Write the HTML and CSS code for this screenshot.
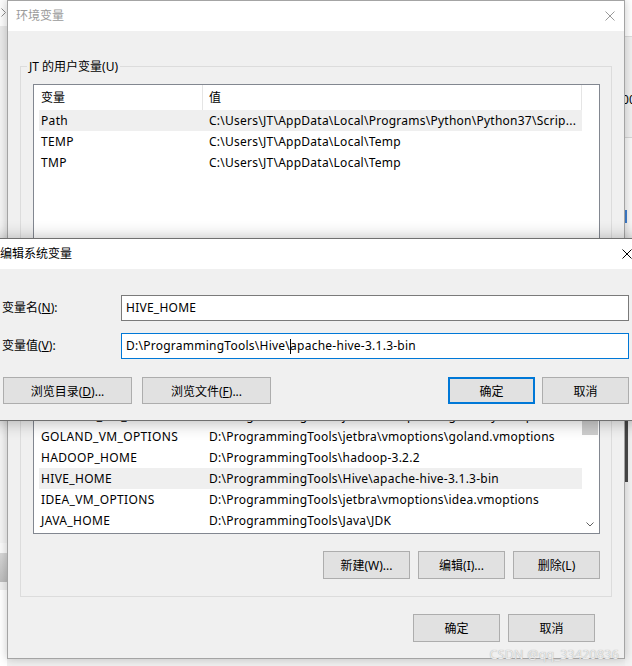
FILE: index.html
```html
<!DOCTYPE html>
<html lang="zh-CN">
<head>
<meta charset="utf-8">
<title>环境变量</title>
<link rel="stylesheet" href="styles.css">
</head>
<body>
<div class="desktop">
  <div class="backdrop">
    <div class="strip">
      <div class="sl-a"><svg class="chev" width="5" height="9" viewBox="0 0 5 9"><polyline points="0.5,0.5 4.5,4.5 0.5,8.5" fill="none" stroke="#8a8a8a" stroke-width="1"/></svg></div>
      <div class="sl-b"></div>
      <div class="sl-c"></div>
      <div class="sl-d"></div>
      <div class="sl-e"></div>
      <div class="sl-f"></div>
      <div class="sl-g"></div>
    </div>
    <div class="backdrop-gap"></div>
    <div class="strip">
      <div class="sr-a"></div>
      <div class="sr-b"><span class="sr-text">00</span></div>
      <div class="sr-c"><span class="sr-mark"></span></div>
      <div class="sr-d"></div>
      <div class="sr-e"><span class="sr-bar"></span></div>
    </div>
  </div>

  <section class="win main-win">
    <header class="titlebar">
      <span class="title">环境变量</span>
      <svg class="close" width="10" height="10" viewBox="0 0 10 10"><path d="M0.5 0.5L9.5 9.5M9.5 0.5L0.5 9.5" stroke="currentColor" stroke-width="1"/></svg>
    </header>
    <div class="win-body">
      <fieldset class="group">
        <legend>JT 的用户变量(U)</legend>
        <div class="listview user-lv">
          <div class="lv-main">
            <div class="lv-header">
              <div class="lv-head-cell lv-head-name">变量</div>
              <div class="lv-head-cell lv-head-val">值</div>
            </div>
            <div class="lv-rows">
              <div class="lv-row hot"><span class="lv-name">Path</span><span class="lv-val">C:\Users\JT\AppData\Local\Programs\Python\Python37\Scrip...</span></div>
              <div class="lv-row"><span class="lv-name">TEMP</span><span class="lv-val">C:\Users\JT\AppData\Local\Temp</span></div>
              <div class="lv-row"><span class="lv-name">TMP</span><span class="lv-val">C:\Users\JT\AppData\Local\Temp</span></div>
            </div>
          </div>
          <div class="vscroll-empty"></div>
        </div>
        <div class="btn-row">
          <button type="button" class="btn">新建(N)...</button>
          <button type="button" class="btn">编辑(E)...</button>
          <button type="button" class="btn">删除(D)</button>
        </div>
      </fieldset>

      <fieldset class="group sys-group">
        <legend>系统变量(S)</legend>
        <div class="listview sys-lv">
          <div class="lv-main">
            <div class="lv-header">
              <div class="lv-head-cell lv-head-name">变量</div>
              <div class="lv-head-cell lv-head-val">值</div>
            </div>
            <div class="lv-rows">
              <div class="lv-row"><span class="lv-name">ComSpec</span><span class="lv-val">C:\Windows\system32\cmd.exe</span></div>
              <div class="lv-row"><span class="lv-name">DriverData</span><span class="lv-val">C:\Windows\System32\Drivers\DriverData</span></div>
              <div class="lv-row"><span class="lv-name">GATEWAY_VM_OPTIONS</span><span class="lv-val">D:\ProgrammingTools\jetbra\vmoptions\gateway.vmoptions</span></div>
              <div class="lv-row"><span class="lv-name">GOLAND_VM_OPTIONS</span><span class="lv-val">D:\ProgrammingTools\jetbra\vmoptions\goland.vmoptions</span></div>
              <div class="lv-row"><span class="lv-name">HADOOP_HOME</span><span class="lv-val">D:\ProgrammingTools\hadoop-3.2.2</span></div>
              <div class="lv-row hot"><span class="lv-name">HIVE_HOME</span><span class="lv-val">D:\ProgrammingTools\Hive\apache-hive-3.1.3-bin</span></div>
              <div class="lv-row"><span class="lv-name">IDEA_VM_OPTIONS</span><span class="lv-val">D:\ProgrammingTools\jetbra\vmoptions\idea.vmoptions</span></div>
              <div class="lv-row"><span class="lv-name">JAVA_HOME</span><span class="lv-val">D:\ProgrammingTools\Java\JDK</span></div>
            </div>
          </div>
          <div class="vscroll">
            <div class="vs-btn"></div>
            <div class="vs-thumb"></div>
            <div class="vs-track"></div>
            <div class="vs-btn"><svg width="8" height="5" viewBox="0 0 8 5"><polyline points="0.5,0.5 4,4 7.5,0.5" fill="none" stroke="#606060" stroke-width="1"/></svg></div>
          </div>
        </div>
        <div class="btn-row">
          <button type="button" class="btn">新建(W)...</button>
          <button type="button" class="btn">编辑(I)...</button>
          <button type="button" class="btn">删除(L)</button>
        </div>
      </fieldset>

      <div class="dlg-btns">
        <button type="button" class="btn">确定</button>
        <button type="button" class="btn">取消</button>
      </div>
    </div>
  </section>

  <section class="win edit-win">
    <header class="titlebar">
      <span class="title">编辑系统变量</span>
      <svg class="close" width="10" height="10" viewBox="0 0 10 10"><path d="M0.5 0.5L9.5 9.5M9.5 0.5L0.5 9.5" stroke="currentColor" stroke-width="1"/></svg>
    </header>
    <div class="edit-body">
      <div class="form">
        <label class="form-label">变量名(<u>N</u>):</label>
        <div class="field">HIVE_HOME</div>
        <label class="form-label">变量值(<u>V</u>):</label>
        <div class="field focus">D:\ProgrammingTools\Hive\<span class="caret"></span>apache-hive-3.1.3-bin</div>
      </div>
      <div class="edit-btns">
        <button type="button" class="btn wide">浏览目录(<u>D</u>)...</button>
        <button type="button" class="btn wide">浏览文件(<u>F</u>)...</button>
        <div class="btn-right">
          <button type="button" class="btn default">确定</button>
          <button type="button" class="btn">取消</button>
        </div>
      </div>
    </div>
  </section>

  <div class="watermark">CSDN @qq_33420836</div>
</div>
</body>
</html>
```

FILE: styles.css
```css
* { box-sizing: border-box; }
html, body { margin: 0; padding: 0; }
body {
  width: 632px;
  height: 666px;
  overflow: hidden;
  font-family: "Noto Sans", "Noto Sans CJK SC", sans-serif;
  font-size: 12px;
  color: #000;
  background: #f0f0f0;
}
.desktop { position: relative; width: 632px; height: 666px; overflow: hidden; }

/* backdrop (other windows behind) */
.backdrop {
  position: absolute;
  inset: 0;
  display: grid;
  grid-template-columns: 7px 618px 7px;
}
.strip { display: flex; flex-direction: column; overflow: hidden; }
.sl-a { height: 26px; background: #fcfcfc; padding: 8px 0 0 1px; }
.chev { display: block; }
.sl-b { height: 34px; background: #e9e9e9; }
.sl-c { height: 483px; background: #f4f4f4; }
.sl-d { height: 10px; background: #fafafa; }
.sl-e { height: 29px; background: linear-gradient(#d6d6d6, #bcbcbc); }
.sl-f { height: 8px; background: #f0f0f0; }
.sl-g { flex: 1; background: #fff; }

.sr-a { height: 37px; background: #fff; border-bottom: 1px solid #dcdcdc; }
.sr-b { height: 101px; background: #f0f0f0; border-bottom: 1px solid #d6d6d6; padding-top: 55px; }
.sr-text { display: block; margin-left: -3px; line-height: 16px; letter-spacing: .25px; }
.sr-c { height: 100px; background: #f8f8f8; padding-top: 72px; }
.sr-mark { display: block; width: 2px; height: 13px; background: #3f7fd0; }
.sr-d { height: 182px; background: #f0f0f0; }
.sr-e { flex: 1; background: #f3f3f3; }
.sr-bar { display: block; width: 3px; height: 62px; background: #4a4a4a; }

/* windows */
.win { position: absolute; background: #f0f0f0; }
.titlebar {
  height: 30px;
  flex-shrink: 0;
  background: #fff;
  display: flex;
  align-items: center;
  justify-content: space-between;
}
.title { line-height: 16px; }
.close { display: block; }

.main-win {
  left: 7px;
  top: 0;
  width: 618px;
  border: 1px solid #a4a4a4;
  box-shadow: 0 0 9px rgba(0, 0, 0, .22);
}
.main-win .titlebar { padding: 0 9px 0 8px; }
.main-win .title { color: #9a9a9a; }
.main-win .close { color: #9a9a9a; }
.win-body { padding: 27px 12px 16px; }

.group {
  margin: 0;
  min-width: 0;
  padding: 9px 11px 17px 12px;
  border: 1px solid #dcdcdc;
}
.group + .group { margin-top: 16px; }
.group legend {
  padding: 0 2px;
  margin-left: -6px;
  line-height: 17px;
}

.listview {
  border: 1px solid #828790;
  background: #fff;
  display: grid;
  grid-template-columns: 1fr 17px;
}
.user-lv { height: 180px; }
.sys-lv { height: 171px; }
.lv-main { display: flex; flex-direction: column; min-width: 0; min-height: 0; overflow: hidden; }
.lv-header { display: flex; height: 25px; flex-shrink: 0; }
.lv-head-cell { line-height: 25px; border-right: 1px solid #e5e5e5; }
.lv-head-name { width: 169px; padding-left: 7px; }
.lv-head-val { width: 379px; padding-left: 6px; }
.lv-rows { flex: 1; min-height: 0; display: flex; flex-direction: column; overflow: hidden; }
.sys-lv .lv-rows { justify-content: flex-end; padding-bottom: 2px; }
.lv-row {
  flex-shrink: 0;
  height: 21px;
  line-height: 21px;
  margin-left: 5px;
  display: grid;
  grid-template-columns: 164px 1fr;
  white-space: nowrap;
  letter-spacing: .25px;
}
.lv-row.hot { background: #efefef; }
.lv-name { padding-left: 2px; overflow: hidden; letter-spacing: .35px; }
.lv-val { padding-left: 6px; overflow: hidden; }

.vscroll { display: flex; flex-direction: column; }
.vs-btn { height: 17px; flex-shrink: 0; display: flex; align-items: center; justify-content: center; }
.vs-btn svg { display: block; margin-left: -1px; }
.vs-thumb { height: 54px; margin: 0 1px 0 0; background: #cdcdcd; }
.vs-track { flex: 1; }

.btn {
  width: 87px;
  height: 28px;
  margin: 0;
  padding: 0;
  border: 1px solid #adadad;
  background: #e1e1e1;
  font: inherit;
  color: #000;
  line-height: normal;
}
.btn-row { display: flex; justify-content: flex-end; gap: 8px; margin-top: 11px; }
.sys-group .btn-row { margin-top: 17px; }
.dlg-btns { display: flex; justify-content: flex-end; gap: 8px; margin-top: 17px; padding-right: 17px; }

/* edit dialog */
.edit-win {
  left: -9px;
  top: 238px;
  width: 658px;
  border: 1px solid #707070;
  box-shadow: 0 1px 16px rgba(0, 0, 0, .3);
}
.edit-win .titlebar { padding: 0 16px 0 8px; }
.edit-win .close { color: #000; }
.edit-body { padding: 26px 19px 16px 10px; }
.form {
  display: grid;
  grid-template-columns: 119px 1fr;
  row-gap: 12px;
  align-items: center;
}
.form-label { line-height: 16px; }
.field {
  height: 26px;
  border: 1px solid #7a7a7a;
  background: #fff;
  padding-left: 4px;
  line-height: 24px;
  white-space: nowrap;
  overflow: hidden;
  letter-spacing: .25px;
}
.field.focus { border-color: #0078d7; }
.caret {
  display: inline-block;
  width: 1px;
  height: 15px;
  margin-right: -1px;
  background: #000;
  vertical-align: middle;
}
.edit-btns { display: flex; gap: 10px; margin-top: 18px; padding-left: 1px; }
.edit-btns .btn { height: 27px; }
.btn.wide { width: 129px; }
.btn-right { margin-left: auto; display: flex; gap: 7px; }
.btn.default { border: 2px solid #0078d7; }

.watermark {
  position: absolute;
  right: 13px;
  bottom: 3px;
  font-size: 12.5px;
  line-height: 16px;
  letter-spacing: .2px;
  color: #ececec;
  text-shadow: 0 0 1px #9a9a9a;
}
```
